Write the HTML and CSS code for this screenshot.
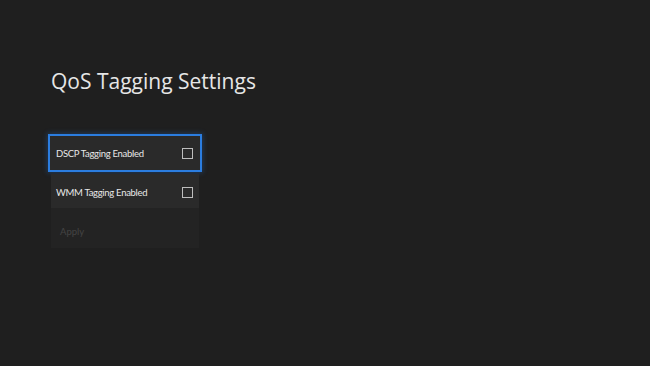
FILE: index.html
```html
<!DOCTYPE html>
<html>
<head>
<meta charset="utf-8">
<link rel="stylesheet" href="styles.css">
</head>
<body>
<main class="page">
  <h1 class="title">QoS Tagging Settings</h1>
  <div class="list">
    <div class="item focused">
      <span class="label">DSCP Tagging Enabled</span>
      <span class="box"></span>
    </div>
    <div class="item">
      <span class="label">WMM Tagging Enabled</span>
      <span class="box"></span>
    </div>
    <div class="item apply">
      <span class="label">Apply</span>
    </div>
  </div>
</main>
</body>
</html>
```
FILE: styles.css
```css
html, body {
  margin: 0;
  padding: 0;
  background: #1f1f1f;
  width: 650px;
  height: 366px;
  overflow: hidden;
}
.page {
  padding: 67px 0 0 51px;
  font-family: "Open Sans", "Noto Sans", sans-serif;
}
.title {
  margin: 0;
  font-weight: 400;
  font-size: 21px;
  line-height: 28px;
  color: #e6e6e6;
}
.list {
  margin-top: 41px;
  width: 148px;
  display: flex;
  flex-direction: column;
}
.item {
  height: 34px;
  background: #2a2a2a;
  display: flex;
  align-items: center;
  justify-content: space-between;
  padding: 0 6px 0 5px;
  box-sizing: border-box;
}
.item.focused {
  margin: 0 -1px 4px;
  padding: 0 7px 0 6px;
  outline: 2px solid #2b7de0;
  box-shadow: 0 0 5px 3px rgba(40, 120, 220, 0.3);
}
.item:nth-child(2) {
  padding-top: 2px;
}
.item.apply {
  background: #232323;
  height: 40px;
  padding: 6px 0 0 9px;
}
.label {
  font-family: "Lato", "Open Sans", sans-serif;
  font-size: 9.5px;
  letter-spacing: -0.3px;
  color: #e8e8e8;
}
.apply .label {
  color: #444;
  letter-spacing: 0;
}
.box {
  width: 9px;
  height: 9px;
  border: 1px solid #bdbdbd;
}
```
